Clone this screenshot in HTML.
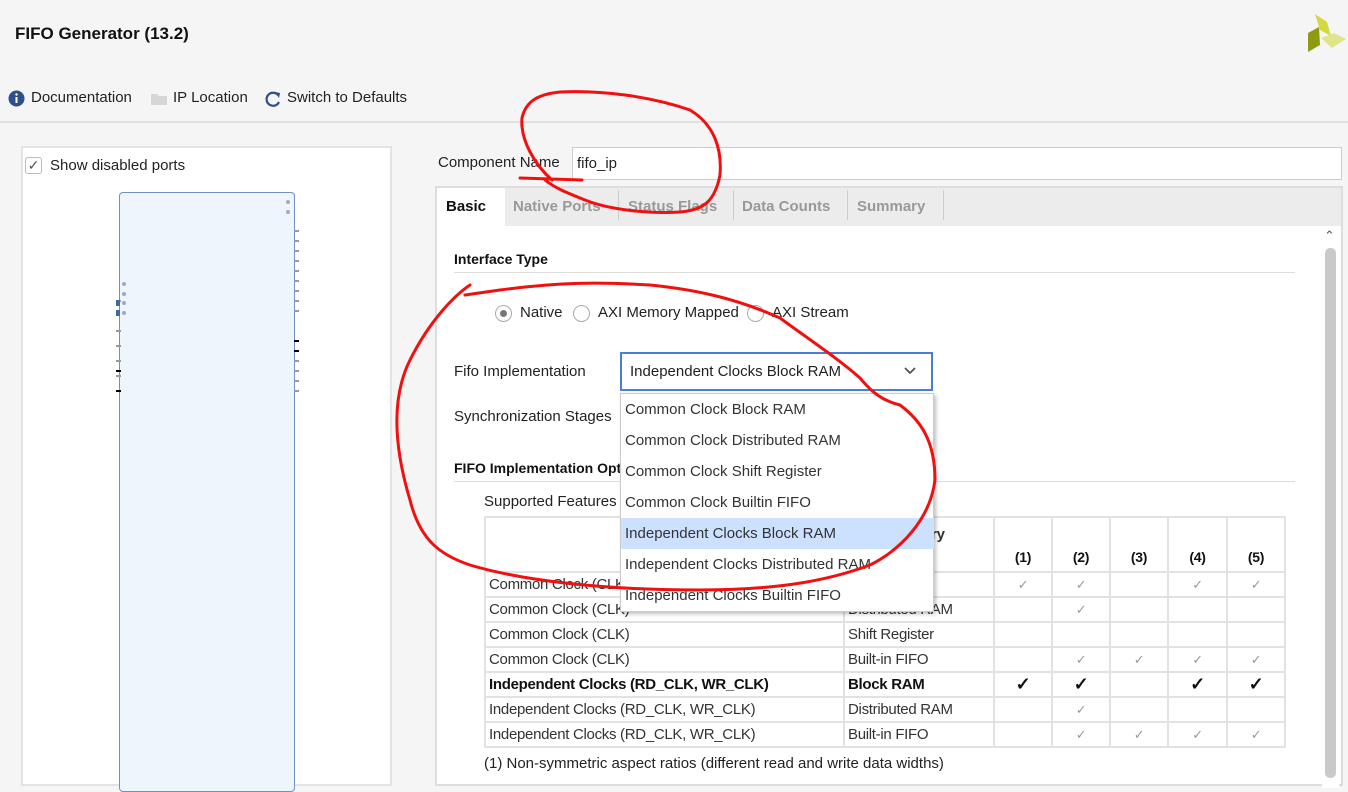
<!DOCTYPE html>
<html><head><meta charset="utf-8"><style>
*{box-sizing:border-box;margin:0;padding:0}
body{width:1348px;height:772px;overflow:hidden;background:#f5f5f5;font-family:"Liberation Sans",sans-serif;font-size:15px;color:#222;position:relative}
.a{position:absolute;white-space:nowrap}
table{border-collapse:collapse;position:absolute;left:484px;top:516px;background:#fff}
td{border:2px solid #e2e2e2;height:25px;padding:0 3px;font-size:15px;color:#333;letter-spacing:-0.3px;white-space:nowrap}
td.c{text-align:center;color:#999;font-size:13px}
td.k{text-align:center;color:#000;font-size:18px}
tr.b td{font-weight:bold;color:#111}
.it{position:absolute;left:0;width:313px;height:31px;line-height:31px;padding-left:4px;color:#333}
.rad{position:absolute;width:17px;height:17px;border:1px solid #aaa;border-radius:50%;background:#fff}
</style></head><body>
<div class="a" style="left:15px;top:24px;font-weight:bold;font-size:17px;color:#111">FIFO Generator (13.2)</div>
<svg class="a" style="left:0;top:0" width="1348" height="60"><polygon points="1315,14 1327,22 1331,36 1320,30" fill="#d6d840"/><polygon points="1308,33 1319,27 1320,45 1308,52" fill="#8f9a10"/><polygon points="1321,38 1334,33 1346,39 1332,48" fill="#e0e48a"/></svg>
<svg class="a" style="left:8px;top:90px" width="17" height="17"><circle cx="8.5" cy="8.5" r="8" fill="#2d4f8c"/><rect x="7.5" y="7" width="2" height="6" fill="#fff"/><circle cx="8.5" cy="4.5" r="1.2" fill="#fff"/></svg>
<div class="a" style="left:31px;top:89px">Documentation</div>
<svg class="a" style="left:150px;top:91px" width="18" height="15"><path d="M1 3h6l2 2h8v9H1z" fill="#d6d6d6"/></svg>
<div class="a" style="left:173px;top:89px">IP Location</div>
<svg class="a" style="left:264px;top:90px" width="18" height="18"><path d="M14 5A6.5 6.5 0 1 0 15 12" fill="none" stroke="#2d4f8c" stroke-width="2.2"/><path d="M11 2l5 1-1 5z" fill="#2d4f8c"/></svg>
<div class="a" style="left:287px;top:89px">Switch to Defaults</div>
<div class="a" style="left:0;top:121px;width:1348px;height:2px;background:#e0e0e0"></div>
<div class="a" style="left:21px;top:146px;width:371px;height:640px;background:#fff;border:2px solid #e3e3e3"></div>
<div class="a" style="left:25px;top:157px;width:17px;height:17px;border:1px solid #bbb;border-radius:3px;background:#fff;font-size:14px;line-height:15px;text-align:center;color:#555">✓</div>
<div class="a" style="left:50px;top:157px">Show disabled ports</div>
<div class="a" style="left:119px;top:192px;width:176px;height:600px;background:#eef5fd;border:1px solid #6f8fc5;border-radius:4px"></div>
<svg class="a" style="left:114px;top:190px" width="190" height="582"><g fill="#999"><rect x="2" y="110" width="5" height="2"/><rect x="2" y="140" width="5" height="2"/><rect x="2" y="155" width="5" height="2"/><rect x="2" y="170" width="5" height="2"/><rect x="2" y="185" width="5" height="2"/><rect x="2" y="200" width="5" height="2"/><rect x="180" y="40" width="5" height="2"/><rect x="180" y="50" width="5" height="2"/><rect x="180" y="60" width="5" height="2"/><rect x="180" y="70" width="5" height="2"/><rect x="180" y="80" width="5" height="2"/><rect x="180" y="90" width="5" height="2"/><rect x="180" y="100" width="5" height="2"/><rect x="180" y="110" width="5" height="2"/><rect x="180" y="120" width="5" height="2"/><rect x="180" y="170" width="5" height="2"/><rect x="180" y="180" width="5" height="2"/><rect x="180" y="190" width="5" height="2"/><rect x="180" y="200" width="5" height="2"/></g><g fill="#000"><rect x="180" y="150" width="5" height="2"/><rect x="180" y="160" width="5" height="2"/><rect x="2" y="180" width="5" height="2"/><rect x="2" y="200" width="5" height="2"/></g><g fill="#3a6aa8"><rect x="2" y="110" width="4" height="6"/><rect x="2" y="120" width="4" height="6"/></g><g fill="#9aaac8"><circle cx="174" cy="12" r="2"/><circle cx="174" cy="22" r="2"/><circle cx="10" cy="94" r="2"/><circle cx="10" cy="104" r="2"/><circle cx="10" cy="113" r="2"/><circle cx="10" cy="123" r="2"/></g></svg>
<div class="a" style="left:438px;top:154px">Component Name</div>
<div class="a" style="left:572px;top:147px;width:770px;height:33px;background:#fff;border:1px solid #ccc;padding:7px 4px">fifo_ip</div>
<div class="a" style="left:435px;top:186px;width:908px;height:600px;background:#fff;border:2px solid #ddd"></div>
<div class="a" style="left:437px;top:188px;width:904px;height:38px;background:#ececec"></div>
<div class="a" style="left:437px;top:188px;width:68px;height:38px;background:#fff"></div>
<div class="a" style="left:446px;top:198px;font-weight:bold;color:#111">Basic</div>
<div class="a" style="left:513px;top:198px;font-weight:bold;color:#999">Native Ports</div>
<div class="a" style="left:618px;top:190px;width:1px;height:30px;background:#ccc"></div>
<div class="a" style="left:628px;top:198px;font-weight:bold;color:#999">Status Flags</div>
<div class="a" style="left:733px;top:190px;width:1px;height:30px;background:#ccc"></div>
<div class="a" style="left:742px;top:198px;font-weight:bold;color:#999">Data Counts</div>
<div class="a" style="left:847px;top:190px;width:1px;height:30px;background:#ccc"></div>
<div class="a" style="left:857px;top:198px;font-weight:bold;color:#999">Summary</div>
<div class="a" style="left:943px;top:190px;width:1px;height:30px;background:#ccc"></div>
<div class="a" style="left:1322px;top:228px;width:17px;height:560px;background:#fff"></div>
<div class="a" style="left:1324px;top:228px;font-size:13px;color:#555">⌃</div>
<div class="a" style="left:1325px;top:248px;width:11px;height:530px;background:#c9c9c9;border-radius:5px"></div>
<div class="a" style="left:454px;top:251px;font-weight:bold;color:#111;font-size:14px">Interface Type</div>
<div class="a" style="left:454px;top:272px;width:841px;height:1px;background:#ddd"></div>
<div class="rad" style="left:495px;top:305px"></div><div class="a" style="left:500px;top:310px;width:7px;height:7px;border-radius:50%;background:#777"></div>
<div class="a" style="left:520px;top:304px">Native</div>
<div class="rad" style="left:573px;top:305px"></div>
<div class="a" style="left:598px;top:304px">AXI Memory Mapped</div>
<div class="rad" style="left:747px;top:305px"></div>
<div class="a" style="left:772px;top:304px">AXI Stream</div>
<div class="a" style="left:454px;top:363px">Fifo Implementation</div>
<div class="a" style="left:620px;top:352px;width:313px;height:39px;border:2px solid #4a7fd0;background:#fff;padding:9px 8px">Independent Clocks Block RAM</div>
<svg class="a" style="left:904px;top:366px" width="12" height="10"><path d="M1 2l5 5 5-5" fill="none" stroke="#555" stroke-width="1.8"/></svg>
<div class="a" style="left:454px;top:408px">Synchronization Stages</div>
<div class="a" style="left:454px;top:460px;font-weight:bold;color:#111;font-size:14px">FIFO Implementation Options</div>
<div class="a" style="left:454px;top:481px;width:841px;height:1px;background:#ddd"></div>
<div class="a" style="left:484px;top:493px">Supported Features</div>
<table>
<tr style="height:55px"><td style="width:359px"></td><td style="width:150px;font-weight:bold;vertical-align:top;padding-top:8px;padding-left:44px">Memory</td><td class="c" style="width:58px;color:#111;font-weight:bold;font-size:14px;vertical-align:bottom;padding-bottom:6px">(1)</td><td class="c" style="width:58px;color:#111;font-weight:bold;font-size:14px;vertical-align:bottom;padding-bottom:6px">(2)</td><td class="c" style="width:58px;color:#111;font-weight:bold;font-size:14px;vertical-align:bottom;padding-bottom:6px">(3)</td><td class="c" style="width:59px;color:#111;font-weight:bold;font-size:14px;vertical-align:bottom;padding-bottom:6px">(4)</td><td class="c" style="width:58px;color:#111;font-weight:bold;font-size:14px;vertical-align:bottom;padding-bottom:6px">(5)</td></tr>
<tr><td>Common Clock (CLK)</td><td>Block RAM</td><td class="c">✓</td><td class="c">✓</td><td class="c"></td><td class="c">✓</td><td class="c">✓</td></tr>
<tr><td>Common Clock (CLK)</td><td>Distributed RAM</td><td class="c"></td><td class="c">✓</td><td class="c"></td><td class="c"></td><td class="c"></td></tr>
<tr><td>Common Clock (CLK)</td><td>Shift Register</td><td class="c"></td><td class="c"></td><td class="c"></td><td class="c"></td><td class="c"></td></tr>
<tr><td>Common Clock (CLK)</td><td>Built-in FIFO</td><td class="c"></td><td class="c">✓</td><td class="c">✓</td><td class="c">✓</td><td class="c">✓</td></tr>
<tr class="b"><td>Independent Clocks (RD_CLK, WR_CLK)</td><td>Block RAM</td><td class="k">✓</td><td class="k">✓</td><td class="k"></td><td class="k">✓</td><td class="k">✓</td></tr>
<tr><td>Independent Clocks (RD_CLK, WR_CLK)</td><td>Distributed RAM</td><td class="c"></td><td class="c">✓</td><td class="c"></td><td class="c"></td><td class="c"></td></tr>
<tr><td>Independent Clocks (RD_CLK, WR_CLK)</td><td>Built-in FIFO</td><td class="c"></td><td class="c">✓</td><td class="c">✓</td><td class="c">✓</td><td class="c">✓</td></tr>
</table>
<div class="a" style="left:484px;top:755px">(1) Non-symmetric aspect ratios (different read and write data widths)</div>
<div class="a" style="left:620px;top:393px;width:314px;height:219px;background:#fff;border:1px solid #ccc;box-shadow:2px 2px 4px rgba(0,0,0,.25)">
<div class="it" style="top:0">Common Clock Block RAM</div>
<div class="it" style="top:31px">Common Clock Distributed RAM</div>
<div class="it" style="top:62px">Common Clock Shift Register</div>
<div class="it" style="top:93px">Common Clock Builtin FIFO</div>
<div class="it" style="top:124px;background:#cce0ff">Independent Clocks Block RAM</div>
<div class="it" style="top:155px">Independent Clocks Distributed RAM</div>
<div class="it" style="top:186px">Independent Clocks Builtin FIFO</div>
</div>
<svg class="a" style="left:0;top:0" width="1348" height="772"><g fill="none" stroke="#f01010" stroke-width="3" stroke-linecap="round">
<path d="M552 180C535 165 520 140 522 118C526 100 540 94 560 92C600 90 650 96 690 110C715 125 722 150 720 175C715 200 705 210 680 212C650 214 610 210 585 200C565 192 555 188 545 180M520 178L582 180"/>
<path d="M470 285C455 295 430 320 410 360C390 400 395 450 410 500C420 540 440 555 470 565C520 580 600 590 700 590C780 590 830 580 870 565C900 550 930 520 935 480C935 440 920 420 900 405C880 400 870 390 860 378C840 360 810 340 780 318C740 300 700 290 650 285C600 282 560 282 500 290L465 295"/>
</g></svg>
</body></html>
